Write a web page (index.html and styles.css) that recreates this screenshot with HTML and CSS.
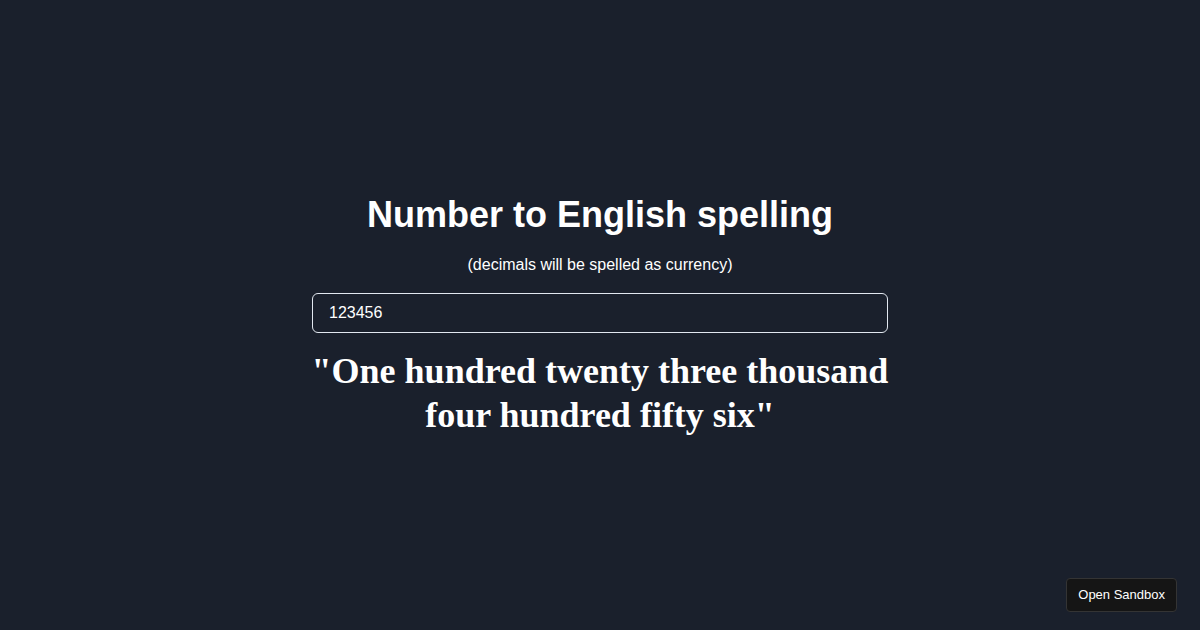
FILE: index.html
```html
<!DOCTYPE html>
<html lang="en">
<head>
<meta charset="utf-8">
<title>Number to English spelling</title>
<link rel="stylesheet" href="styles.css">
</head>
<body>
<main class="page">
  <div class="speller">
    <h1 class="title">Number to English spelling</h1>
    <p class="hint" id="hint">(decimals will be spelled as currency)</p>
    <input class="number" type="text" value="123456" aria-label="Number" aria-describedby="hint">
    <h2 class="result">"One hundred twenty three thousand four hundred fifty six"</h2>
  </div>
</main>
<button class="sandbox" type="button">Open Sandbox</button>
</body>
</html>
```

FILE: styles.css
```css
* {
  box-sizing: border-box;
}

body {
  margin: 0;
  background: #1a202c;
  color: #fff;
  font-family: "Nimbus Sans", "Liberation Sans", Arial, sans-serif;
  font-size: 16px;
  line-height: 24px;
}

.page {
  display: flex;
  align-items: center;
  justify-content: center;
  min-height: 100vh;
}

.speller {
  display: flex;
  flex-direction: column;
  gap: 16px;
  width: 100%;
  max-width: 576px;
  text-align: center;
}

.title,
.hint,
.result {
  margin: 0;
}

.title,
.result {
  font-size: 36px;
  font-weight: 700;
  line-height: 44px;
}

.result {
  margin: 0 -8px;
  font-family: "Nimbus Roman", "Liberation Serif", "Times New Roman", serif;
}

.number {
  width: 100%;
  height: 40px;
  padding: 0 16px;
  border: 1px solid #e2e8f0;
  border-radius: 6px;
  background: transparent;
  color: inherit;
  font: inherit;
}

.sandbox {
  position: fixed;
  right: 23px;
  bottom: 18px;
  height: 34px;
  padding: 0 11px 2px;
  border: 1px solid #343434;
  border-radius: 4px;
  background: #151515;
  color: #fff;
  font-family: inherit;
  font-size: 13px;
}
```
